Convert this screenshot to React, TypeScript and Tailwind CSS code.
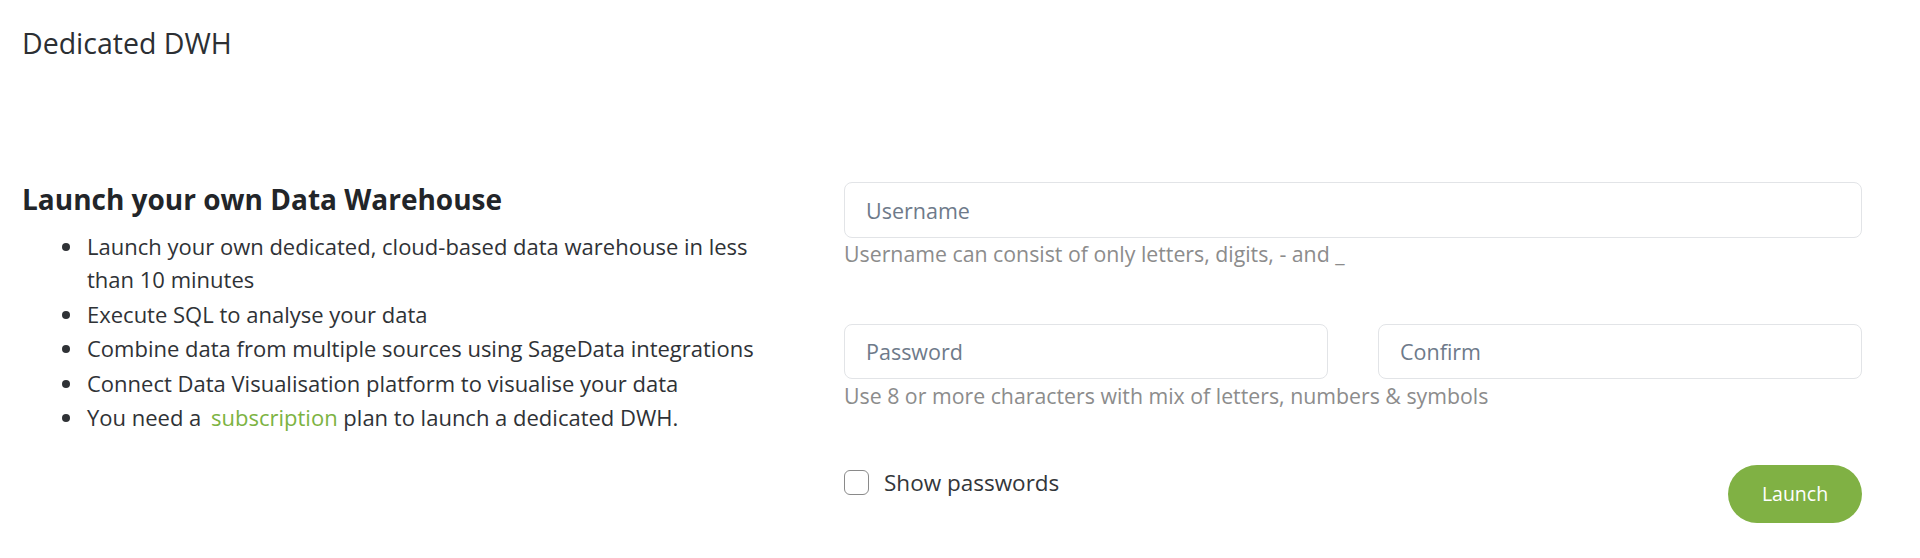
import React from "react";

export default function App() {
  return (
    <div className="min-h-[558px] w-full bg-white text-[#2c2f33] font-['Open_Sans','Lato',sans-serif]">
      <div className="px-[22px] pt-[26px]">
        <h1 className="text-[28.5px] leading-[34px] font-normal">Dedicated DWH</h1>
      </div>
      <div className="flex pl-[22px] pr-[58px] mt-[122px]">
        <div className="w-[760px] shrink-0">
          <h2 className="text-[28px] leading-[34px] font-bold text-[#222529]">
            Launch your own Data Warehouse
          </h2>
          <ul className="mt-[14px] pl-[63px] list-disc text-[22px] leading-[33px] text-[#2f3236] w-[748px]">
            <li className="pl-[2px] mb-[1.5px]">
              Launch your own dedicated, cloud-based data warehouse in less than 10 minutes
            </li>
            <li className="pl-[2px] mb-[1.5px]">Execute SQL to analyse your data</li>
            <li className="pl-[2px] mb-[1.5px]">Combine data from multiple sources using SageData integrations</li>
            <li className="pl-[2px] mb-[1.5px]">Connect Data Visualisation platform to visualise your data</li>
            <li className="pl-[2px] mb-[1.5px]">
              You need a <span className="ml-[4px] text-[#7cb342]">subscription</span> plan to launch a dedicated DWH.
            </li>
          </ul>
        </div>
        <div className="ml-[62px] flex-1 flex flex-col">
          <input
            placeholder="Username"
            className="h-[56px] w-full rounded-[8px] border border-[#e2e4e7] px-[21px] text-[21.5px] placeholder:text-[#6e7a8a] outline-none"
          />
          <p className="mt-[4px] text-[21.3px] leading-[24px] text-[#8c8c8c]">
            Username can consist of only letters, digits, - and _
          </p>
          <div className="mt-[58px] flex gap-[50px]">
            <input
              type="password"
              placeholder="Password"
              className="h-[55px] flex-1 min-w-0 rounded-[8px] border border-[#e2e4e7] px-[21px] text-[21.5px] placeholder:text-[#6e7a8a] outline-none"
            />
            <input
              type="password"
              placeholder="Confirm"
              className="h-[55px] flex-1 min-w-0 rounded-[8px] border border-[#e2e4e7] px-[21px] text-[21.5px] placeholder:text-[#6e7a8a] outline-none"
            />
          </div>
          <p className="mt-[5px] text-[21.3px] leading-[24px] text-[#8c8c8c]">
            Use 8 or more characters with mix of letters, numbers &amp; symbols
          </p>
          <div className="mt-[57px] flex items-start justify-between">
            <label className="mt-[5px] flex items-center gap-[15px] text-[22.5px] leading-[25px] text-[#33363a]">
              <span className="block h-[25px] w-[25px] rounded-[6px] border-[1.5px] border-[#8a8a8a] bg-white" />
              Show passwords
            </label>
            <button className="h-[58px] w-[134px] rounded-full bg-[#80b144] text-[19.5px] text-white">
              Launch
            </button>
          </div>
        </div>
      </div>
    </div>
  );
}
